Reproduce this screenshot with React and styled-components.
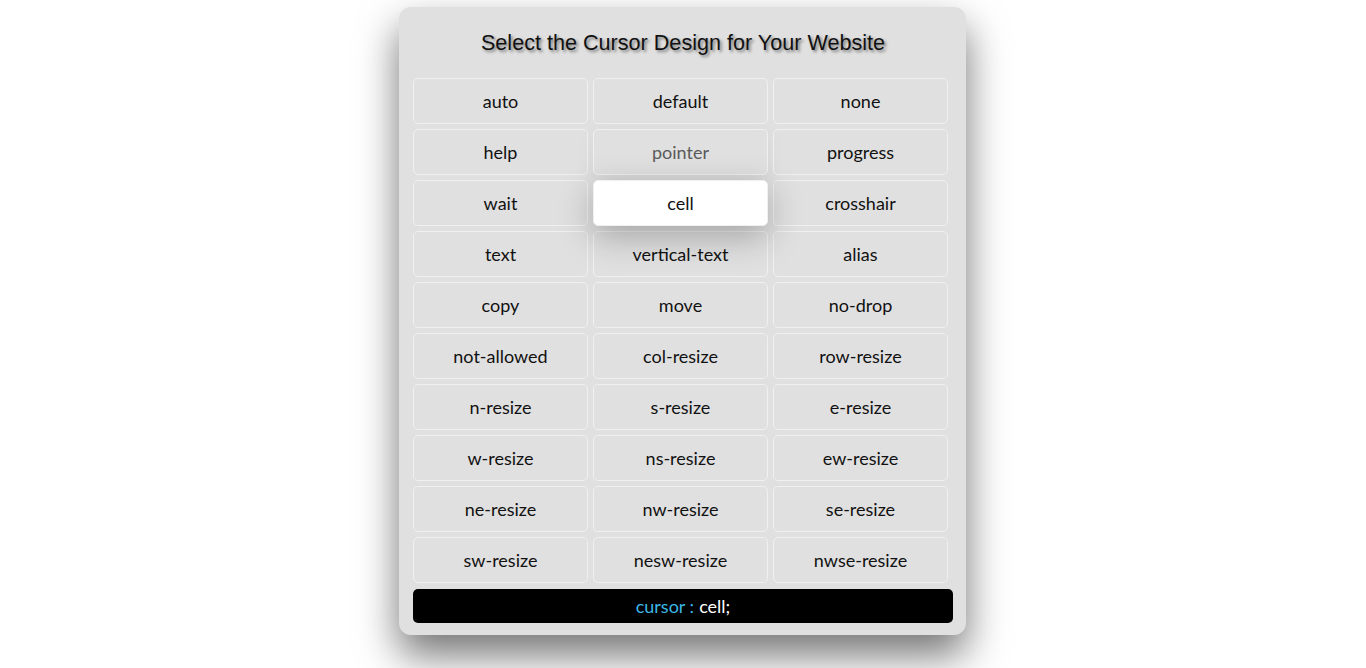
import React, { useState } from 'react'
import styled, { createGlobalStyle } from 'styled-components'

const GlobalStyle = createGlobalStyle`
    html, body {
        margin: 0;
        padding: 0;
        background: #ffffff;
    }
`

const cursors = [
    'auto', 'default', 'none',
    'help', 'pointer', 'progress',
    'wait', 'cell', 'crosshair',
    'text', 'vertical-text', 'alias',
    'copy', 'move', 'no-drop',
    'not-allowed', 'col-resize', 'row-resize',
    'n-resize', 's-resize', 'e-resize',
    'w-resize', 'ns-resize', 'ew-resize',
    'ne-resize', 'nw-resize', 'se-resize',
    'sw-resize', 'nesw-resize', 'nwse-resize',
]

const Page = styled.div`
    display: flex;
    justify-content: center;
    align-items: flex-start;
    box-sizing: border-box;
    min-height: 100vh;
    padding: 7px 1px 0 0;
`

const Card = styled.div`
    width: 540px;
    padding: 14px 13px 12px 14px;
    background: #e0e0e0;
    border-radius: 12px;
    box-shadow: 0 20px 40px rgba(0, 0, 0, 0.55);
`

const Title = styled.h2`
    margin: 10px 0 23px;
    text-align: center;
    font-family: 'Liberation Sans', Arial, sans-serif;
    font-size: 21.6px;
    font-weight: 400;
    line-height: 24px;
    color: #111;
    text-shadow: 2px 2px 3px rgba(0, 0, 0, 0.45);
`

const Grid = styled.div`
    display: grid;
    grid-template-columns: repeat(3, 175px);
    grid-auto-rows: 46px;
    gap: 5px;
`

const CursorButton = styled.button`
    display: flex;
    align-items: center;
    justify-content: center;
    padding: 0;
    border: 1px solid #f0f0f0;
    border-radius: 5px;
    font-family: Lato, 'Open Sans', sans-serif;
    font-size: 18px;
    color: ${({ $hover }) => ($hover ? '#5a5a5a' : '#111')};
    background: ${({ $active }) => ($active ? '#ffffff' : 'transparent')};
    box-shadow: ${({ $active, $hover }) =>
        $active ? '0 10px 35px rgba(0, 0, 0, 0.28)' : $hover ? '0 6px 20px rgba(0, 0, 0, 0.05)' : 'none'};
    position: relative;
    z-index: ${({ $active }) => ($active ? 1 : 0)};
    cursor: ${({ $cursor }) => $cursor};
`

const CodeBar = styled.div`
    margin-top: 6px;
    height: 34px;
    display: flex;
    align-items: center;
    justify-content: center;
    background: #000;
    border-radius: 5px;
    font-family: Lato, 'Open Sans', sans-serif;
    font-size: 18px;
    color: #fff;
`

const Prop = styled.span`
    color: #3bb7e6;
    margin-right: 5px;
`

export default function App() {
    const [selected, setSelected] = useState('cell')

    return (
        <>
            <GlobalStyle />
            <Page>
                <Card>
                    <Title>Select the Cursor Design for Your Website</Title>
                    <Grid>
                        {cursors.map((c) => (
                            <CursorButton
                                key={c}
                                $cursor={c}
                                $active={c === selected}
                                $hover={c === 'pointer'}
                                onClick={() => setSelected(c)}
                            >
                                {c}
                            </CursorButton>
                        ))}
                    </Grid>
                    <CodeBar>
                        <Prop>cursor :</Prop>
                        {selected};
                    </CodeBar>
                </Card>
            </Page>
        </>
    )
}
